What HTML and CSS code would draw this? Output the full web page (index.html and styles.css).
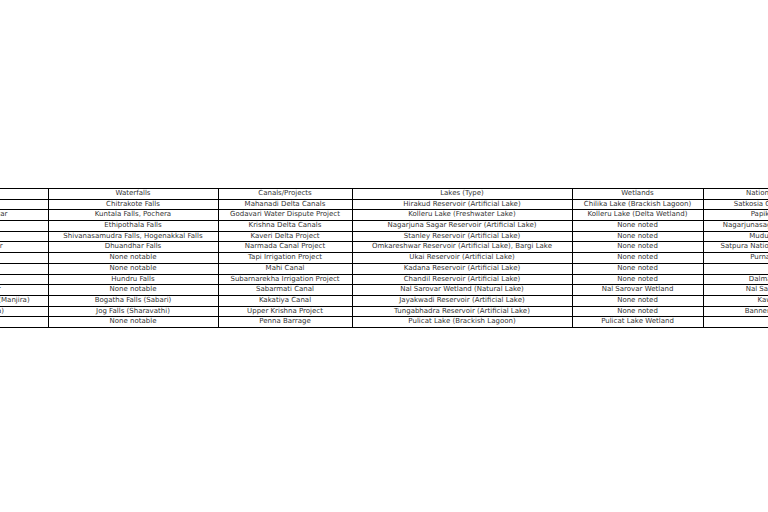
FILE: index.html
```html
<!DOCTYPE html>
<html lang="en">
<head>
<meta charset="utf-8">
<title>Rivers of India</title>
<link rel="stylesheet" href="styles.css">
</head>
<body>
<table class="rivers">
  <colgroup>
    <col class="c-river">
    <col class="c-dams">
    <col class="c-falls">
    <col class="c-canals">
    <col class="c-lakes">
    <col class="c-wet">
    <col class="c-parks">
    <col class="c-mouth">
  </colgroup>
  <thead>
    <tr><th>River</th><th>Major Dams</th><th>Waterfalls</th><th>Canals/Projects</th><th>Lakes (Type)</th><th>Wetlands</th><th>National Parks/Sanctuaries</th><th>Drains Into</th></tr>
  </thead>
  <tbody>
    <tr><td>Mahanadi</td><td>Hirakud Dam</td><td>Chitrakote Falls</td><td>Mahanadi Delta Canals</td><td>Hirakud Reservoir (Artificial Lake)</td><td>Chilika Lake (Brackish Lagoon)</td><td>Satkosia Gorge Wildlife Sanctuary</td><td>Bay of Bengal</td></tr>
    <tr><td>Godavari</td><td>Gangapur, Sriram Sagar</td><td>Kuntala Falls, Pochera</td><td>Godavari Water Dispute Project</td><td>Kolleru Lake (Freshwater Lake)</td><td>Kolleru Lake (Delta Wetland)</td><td>Papikonda National Park</td><td>Bay of Bengal</td></tr>
    <tr><td>Krishna</td><td>Srisailam Dam</td><td>Ethipothala Falls</td><td>Krishna Delta Canals</td><td>Nagarjuna Sagar Reservoir (Artificial Lake)</td><td>None noted</td><td>Nagarjunasagar-Srisailam Tiger Reserve</td><td>Bay of Bengal</td></tr>
    <tr><td>Kaveri</td><td>Mettur Dam</td><td>Shivanasamudra Falls, Hogenakkal Falls</td><td>Kaveri Delta Project</td><td>Stanley Reservoir (Artificial Lake)</td><td>None noted</td><td>Mudumalai National Park</td><td>Bay of Bengal</td></tr>
    <tr><td>Narmada</td><td>Bargi, Sardar Sarovar</td><td>Dhuandhar Falls</td><td>Narmada Canal Project</td><td>Omkareshwar Reservoir (Artificial Lake), Bargi Lake</td><td>None noted</td><td>Satpura National Park, Bori Tiger Reserve</td><td>Arabian Sea</td></tr>
    <tr><td>Tapi</td><td>Ukai Dam</td><td>None notable</td><td>Tapi Irrigation Project</td><td>Ukai Reservoir (Artificial Lake)</td><td>None noted</td><td>Purna Wildlife Sanctuary</td><td>Arabian Sea</td></tr>
    <tr><td>Mahi</td><td>Kadana Dam</td><td>None notable</td><td>Mahi Canal</td><td>Kadana Reservoir (Artificial Lake)</td><td>None noted</td><td>None noted</td><td>Arabian Sea</td></tr>
    <tr><td>Subarnarekha</td><td>Chandil Dam</td><td>Hundru Falls</td><td>Subarnarekha Irrigation Project</td><td>Chandil Reservoir (Artificial Lake)</td><td>None noted</td><td>Dalma Wildlife Sanctuary</td><td>Bay of Bengal</td></tr>
    <tr><td>Sabarmati</td><td>Sabarmati Reservoir</td><td>None notable</td><td>Sabarmati Canal</td><td>Nal Sarovar Wetland (Natural Lake)</td><td>Nal Sarovar Wetland</td><td>Nal Sarovar Bird Sanctuary</td><td>Arabian Sea</td></tr>
    <tr><td>Manjira</td><td>Singur Dam &amp; Nizam Sagar (Manjira)</td><td>Bogatha Falls (Sabari)</td><td>Kakatiya Canal</td><td>Jayakwadi Reservoir (Artificial Lake)</td><td>None noted</td><td>Kawal Tiger Reserve</td><td>Godavari</td></tr>
    <tr><td>Tungabhadra</td><td>Almatti Dam (Krishna)</td><td>Jog Falls (Sharavathi)</td><td>Upper Krishna Project</td><td>Tungabhadra Reservoir (Artificial Lake)</td><td>None noted</td><td>Bannerghatta National Park</td><td>Krishna</td></tr>
    <tr><td>Penna</td><td>Somasila Dam</td><td>None notable</td><td>Penna Barrage</td><td>Pulicat Lake (Brackish Lagoon)</td><td>Pulicat Lake Wetland</td><td>None noted</td><td>Bay of Bengal</td></tr>
  </tbody>
</table>
</body>
</html>
```

FILE: styles.css
```css
html, body {
  margin: 0;
  padding: 0;
  background: #ffffff;
}

body {
  box-sizing: border-box;
  height: 100vh;
  padding-top: 4px;
  display: flex;
  align-items: center;
  justify-content: center;
  font-family: "DejaVu Sans", Verdana, sans-serif;
  color: #333;
}

.rivers {
  flex: none;
  width: 1172px;
  table-layout: fixed;
  border-collapse: collapse;
  font-size: 7px;
  line-height: 1.1;
}

.rivers th,
.rivers td {
  border: 1px solid #000;
  padding: 1px 2px;
  text-align: center;
  font-weight: normal;
  white-space: nowrap;
  overflow: hidden;
}

.c-river { width: 84px; }
.c-dams { width: 166px; }
.c-falls { width: 170px; }
.c-canals { width: 134px; }
.c-lakes { width: 220px; }
.c-wet { width: 131px; }
.c-parks { width: 180px; }
.c-mouth { width: 87px; }
```
